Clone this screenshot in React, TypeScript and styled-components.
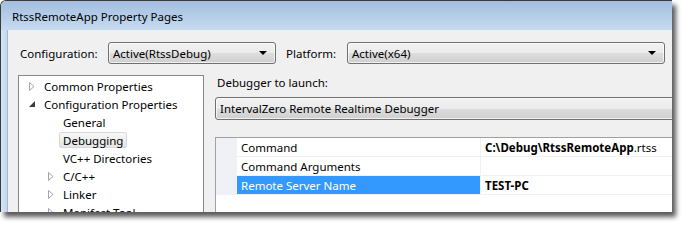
import React from "react";
import styled, { createGlobalStyle } from "styled-components";

const Global = createGlobalStyle`
  html, body { margin: 0; padding: 0; background: #ffffff; }
  body { font-family: "Noto Sans", "Liberation Sans", sans-serif; font-size: 11.5px; color: #000; }
  * { box-sizing: border-box; }
`;

const Page = styled.div`
  width: 690px;
  height: 230px;
  overflow: hidden;
  background: #fff;
`;

const Window = styled.div`
  width: 672px;
  height: 212px;
  border-top: 1px solid #3a3a3a;
  border-left: 1px solid #3a3a3a;
  border-top-left-radius: 6px;
  box-shadow: 4px 5px 5px rgba(0, 0, 0, 0.65);
  display: flex;
  flex-direction: column;
  overflow: hidden;
  background: #f0f0f0;
`;

const TitleBar = styled.div`
  height: 29px;
  flex: none;
  display: flex;
  align-items: center;
  padding-left: 11px;
  padding-top: 2px;
  background: linear-gradient(#a2bedf, #c7dbf0);
  font-size: 11.5px;
`;

const FrameBody = styled.div`
  flex: 1;
  display: flex;
  min-height: 0;
`;

const SideFrame = styled.div`
  width: 7px;
  flex: none;
  background: linear-gradient(90deg, #d7e5f4, #c3d7ee);
  border-right: 1px solid #a5b9d1;
`;

const Content = styled.div`
  flex: 1;
  min-width: 0;
  overflow: hidden;
  padding: 12px 0 0 10px;
  display: flex;
  flex-direction: column;
`;

const ConfigRow = styled.div`
  display: flex;
  align-items: center;
  height: 22px;
`;

const Label = styled.span<{ $w?: number; $ml?: number }>`
  width: ${(p) => (p.$w ? `${p.$w}px` : "auto")};
  margin-left: ${(p) => p.$ml ?? 0}px;
  flex: none;
  white-space: nowrap;
`;

const Combo = styled.div<{ $w: number; $h?: number; $mt?: number }>`
  width: ${(p) => p.$w}px;
  height: ${(p) => p.$h ?? 22}px;
  margin-top: ${(p) => p.$mt ?? 0}px;
  flex: none;
  border: 1px solid #707070;
  border-radius: 3px;
  background: linear-gradient(#f2f2f2 0%, #ebebeb 50%, #dddddd 51%, #cfcfcf 100%);
  display: flex;
  align-items: center;
  padding: 0 8px 0 4px;
  white-space: nowrap;
  box-shadow: inset 0 0 0 1px rgba(255, 255, 255, 0.7);
`;

const ComboText = styled.span`
  flex: 1;
`;

const Arrow = styled.span`
  width: 0;
  height: 0;
  border-left: 4px solid transparent;
  border-right: 4px solid transparent;
  border-top: 4px solid #000;
`;

const Lower = styled.div`
  display: flex;
  margin-top: 11px;
  gap: 11px;
`;

const Tree = styled.div`
  width: 186px;
  height: 200px;
  flex: none;
  border: 1px solid #828790;
  background: #fff;
  padding-top: 1px;
`;

const TreeRow = styled.div<{ $level: number }>`
  height: 18px;
  display: flex;
  align-items: center;
  padding-left: ${(p) => (p.$level === 0 ? 10 : 29)}px;
`;

const Expander = styled.span`
  width: 14px;
  flex: none;
  display: flex;
  align-items: center;
`;

const ItemText = styled.span<{ $selected?: boolean }>`
  white-space: nowrap;
  padding: 0 3px;
  margin-left: -3px;
  height: 16px;
  line-height: 15px;
  border: 1px solid ${(p) => (p.$selected ? "#d9d9d9" : "transparent")};
  border-radius: 2px;
  background: ${(p) => (p.$selected ? "linear-gradient(#f8f8f8, #e5e5e5)" : "transparent")};
`;

const RightPanel = styled.div`
  width: 470px;
  flex: none;
  display: flex;
  flex-direction: column;
`;

const PanelLabel = styled.div`
  height: 18px;
  display: flex;
  align-items: center;
  padding-left: 2px;
  margin-top: -2px;
`;

const Grid = styled.div`
  margin-top: 17px;
  height: 100px;
  border-top: 1px solid #a0a0a0;
  border-left: 1px solid #a0a0a0;
  background: #fff;
`;

const GridRow = styled.div`
  display: grid;
  grid-template-columns: 21px 243px 1fr;
  height: 19px;
`;

const Gutter = styled.div`
  background: #eff1f7;
`;

const Cell = styled.div<{ $selected?: boolean; $value?: boolean }>`
  display: flex;
  align-items: center;
  padding-left: 4px;
  white-space: nowrap;
  border-bottom: 1px solid #f0f0f5;
  border-left: ${(p) => (p.$value ? "1px solid #f0f0f5" : "none")};
  background: ${(p) => (p.$selected ? "#3399ff" : "#fff")};
  color: ${(p) => (p.$selected ? "#fff" : "#000")};
`;

const Bold = styled.span`
  font-weight: 700;
`;

function CollapsedIcon() {
  return (
    <svg width="6" height="9" viewBox="0 0 6 9">
      <path d="M0.5 0.5 L5 4.5 L0.5 8.5 Z" fill="#fff" stroke="#a6a6a6" strokeWidth="1" />
    </svg>
  );
}

function ExpandedIcon() {
  return (
    <svg width="6" height="6" viewBox="0 0 6 6">
      <path d="M6 0 L6 6 L0 6 Z" fill="#3c3c3c" />
    </svg>
  );
}

type TreeItem = { text: string; level: number; expander?: "open" | "closed"; selected?: boolean };

const treeItems: TreeItem[] = [
  { text: "Common Properties", level: 0, expander: "closed" },
  { text: "Configuration Properties", level: 0, expander: "open" },
  { text: "General", level: 1 },
  { text: "Debugging", level: 1, selected: true },
  { text: "VC++ Directories", level: 1 },
  { text: "C/C++", level: 1, expander: "closed" },
  { text: "Linker", level: 1, expander: "closed" },
  { text: "Manifest Tool", level: 1, expander: "closed" },
];

export default function App() {
  return (
    <Page>
      <Global />
      <Window>
        <TitleBar>RtssRemoteApp Property Pages</TitleBar>
        <FrameBody>
          <SideFrame />
          <Content>
            <ConfigRow>
              <Label $w={88} $ml={2}>Configuration:</Label>
              <Combo $w={168}>
                <ComboText>Active(RtssDebug)</ComboText>
                <Arrow />
              </Combo>
              <Label $w={61} $ml={10}>Platform:</Label>
              <Combo $w={318}>
                <ComboText>Active(x64)</ComboText>
                <Arrow />
              </Combo>
            </ConfigRow>
            <Lower>
              <Tree>
                {treeItems.map((it) => (
                  <TreeRow key={it.text} $level={it.level}>
                    <Expander>
                      {it.expander === "closed" && <CollapsedIcon />}
                      {it.expander === "open" && <ExpandedIcon />}
                    </Expander>
                    <ItemText $selected={it.selected}>{it.text}</ItemText>
                  </TreeRow>
                ))}
              </Tree>
              <RightPanel>
                <PanelLabel>Debugger to launch:</PanelLabel>
                <Combo $w={480} $h={23} $mt={6}>
                  <ComboText>IntervalZero Remote Realtime Debugger</ComboText>
                </Combo>
                <Grid>
                  <GridRow>
                    <Gutter />
                    <Cell>Command</Cell>
                    <Cell $value>
                      <Bold>C:\Debug\RtssRemoteApp</Bold>.rtss
                    </Cell>
                  </GridRow>
                  <GridRow>
                    <Gutter />
                    <Cell>Command Arguments</Cell>
                    <Cell $value />
                  </GridRow>
                  <GridRow>
                    <Gutter />
                    <Cell $selected>Remote Server Name</Cell>
                    <Cell $value>
                      <Bold>TEST-PC</Bold>
                    </Cell>
                  </GridRow>
                </Grid>
              </RightPanel>
            </Lower>
          </Content>
        </FrameBody>
      </Window>
    </Page>
  );
}
